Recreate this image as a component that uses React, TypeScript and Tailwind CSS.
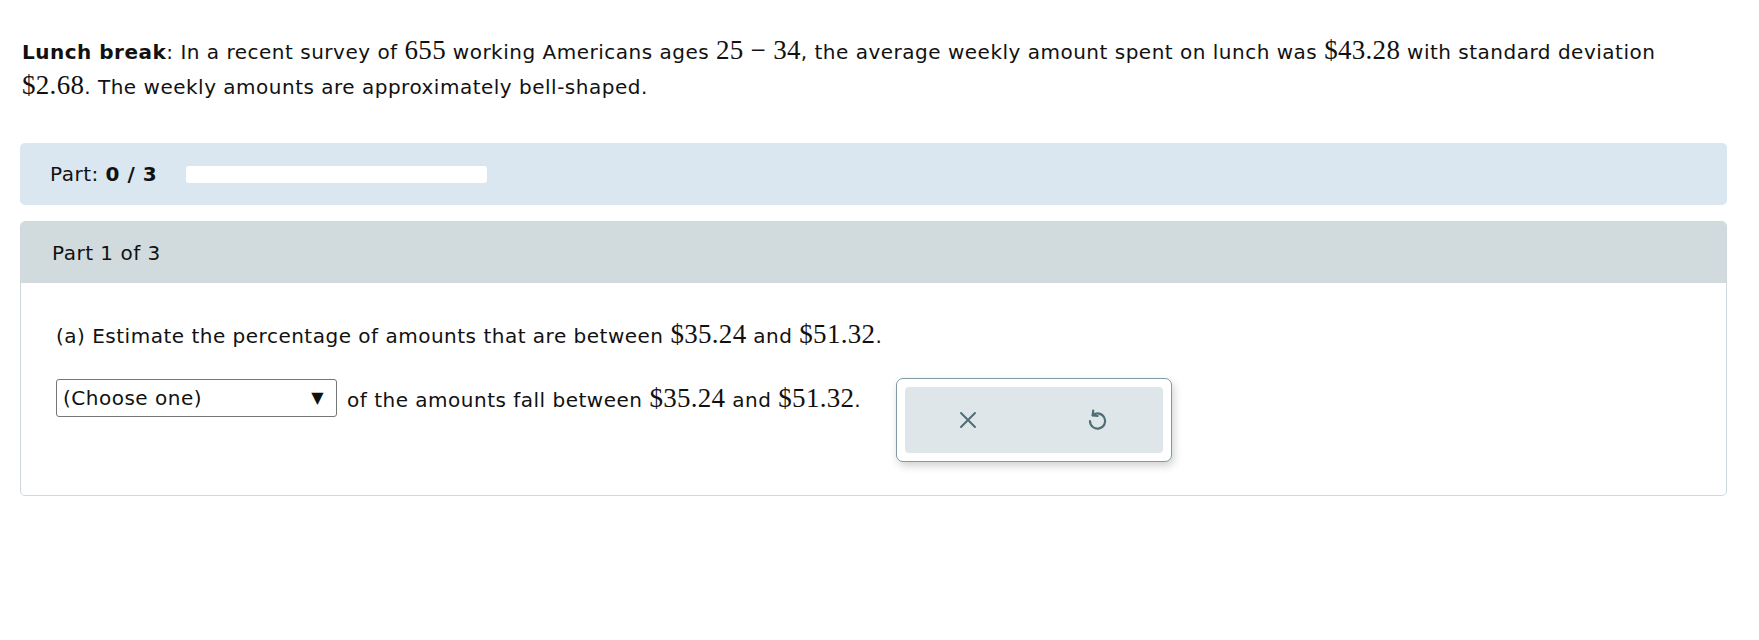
import React from 'react';

const M: React.FC<{ children: React.ReactNode }> = ({ children }) => (
    <span className="font-['Liberation_Serif',serif] text-[27px] leading-none tracking-[0.3px]">{children}</span>
);

const App: React.FC = () => {
    return (
        <div className="min-h-[640px] w-full bg-white font-['DejaVu_Sans','Verdana',sans-serif] text-[20px] tracking-[0.5px] text-[#111]">
            <div className="pl-[20px] pr-[32px] pt-[35px]">
                {/* Problem statement */}
                <p className="pl-[2px] pr-[40px] leading-[35px]">
                    <b>Lunch break</b>: In a recent survey of <M>655</M> working Americans ages <M>25 − 34</M>, the average weekly amount spent on lunch was <M>$43.28</M> with standard deviation <M>$2.68</M>. The weekly amounts are approximately bell-shaped.
                </p>

                {/* Progress */}
                <div className="mt-[38px] flex h-[62px] items-center rounded-[5px] bg-[#dae6f0] pl-[30px]">
                    <span>Part: <b>0 / 3</b></span>
                    <div className="ml-[29px] h-[17px] w-[301px] rounded-[3px] bg-white" />
                </div>

                {/* Part card */}
                <div className="mt-[16px] overflow-hidden rounded-[5px] border border-[#cfd8dc]">
                    <div className="flex h-[61px] items-center bg-[#d1dadd] pl-[31px]">Part 1 of 3</div>
                    <div className="pl-[35px] pb-[33px] pt-[38px]">
                        <p className="leading-[24px]">
                            (a) Estimate the percentage of amounts that are between <M>$35.24</M> and <M>$51.32</M>.
                        </p>
                        <div className="mt-[30px] flex items-start">
                            <div className="mt-[1px] flex items-center">
                                <div className="flex h-[38px] w-[281px] items-center justify-between rounded-[3px] border border-[#767676] pl-[6px] pr-[12px]">
                                    <span>(Choose one)</span>
                                    <span className="text-[16px]">▼</span>
                                </div>
                                <span className="ml-[10px] leading-[24px]">
                                    of the amounts fall between <M>$35.24</M> and <M>$51.32</M>.
                                </span>
                            </div>
                            <div className="ml-[35px] rounded-[7px] border border-[#7f9ba3] bg-white p-[8px] shadow-[2px_4px_8px_rgba(0,0,0,0.18)]">
                                <div className="flex h-[66px] w-[258px] items-center justify-around rounded-[4px] bg-[#dfe6e9]">
                                    <svg width="20" height="20" viewBox="0 0 20 20" fill="none" stroke="#4e6e77" strokeWidth="2" strokeLinecap="round">
                                        <path d="M3 3L17 17M17 3L3 17" />
                                    </svg>
                                    <svg width="26" height="26" viewBox="0 0 24 24" fill="none" stroke="#4e6e77" strokeWidth="2" strokeLinecap="round" strokeLinejoin="round">
                                        <path d="M8 7.6A7 7 0 1 1 5.5 13" />
                                        <path d="M8.5 3.2L8 7.8L12.6 8.3" />
                                    </svg>
                                </div>
                            </div>
                        </div>
                    </div>
                </div>
            </div>
        </div>
    );
};

export default App;
